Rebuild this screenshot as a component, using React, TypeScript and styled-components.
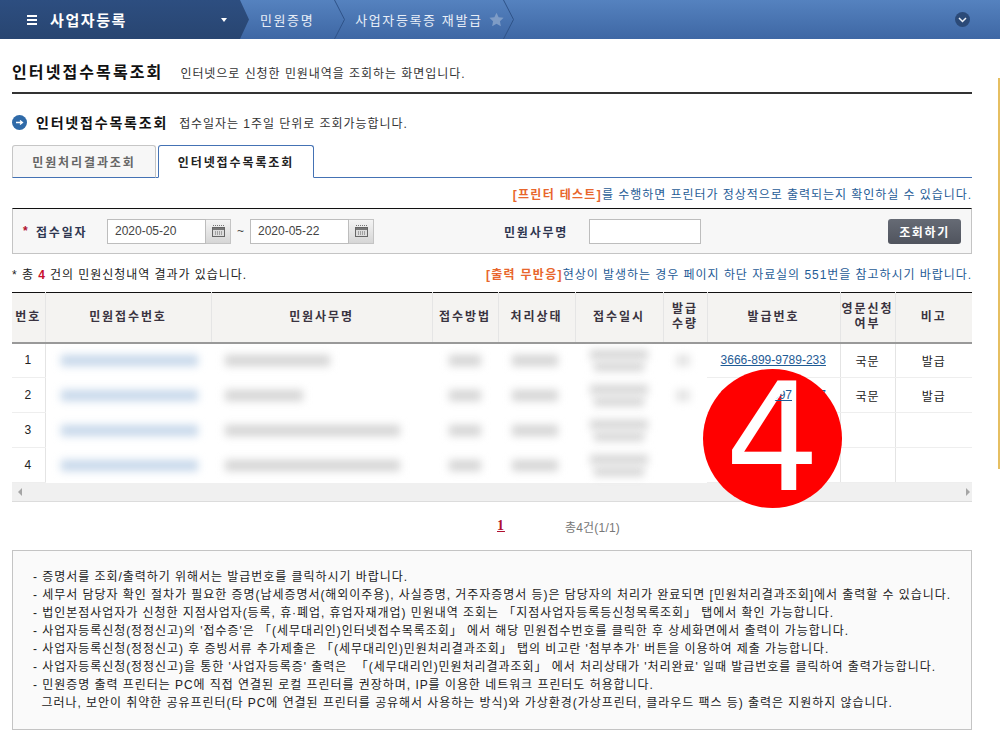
import styled, { createGlobalStyle } from "styled-components";

const GlobalStyle = createGlobalStyle`
  html, body {
    margin: 0;
    padding: 0;
    background: #fff;
    overflow: hidden;
  }
  body {
    font-family: "Liberation Sans", "Noto Sans CJK KR", sans-serif;
    font-size: 12px;
    color: #222;
    letter-spacing: 0.95px;
  }
  * { box-sizing: border-box; }
`;

const TopBar = styled.header`
  display: flex;
  align-items: center;
  height: 39px;
  background: linear-gradient(#5582bf, #3e67a4);
  color: #fff;
`;
const MenuSeg = styled.div`
  display: flex;
  align-items: center;
  width: 249px;
  height: 39px;
  padding-left: 27px;
  background: linear-gradient(#2d4e80, #284571);
  clip-path: polygon(0 0, 240px 0, 249px 19.5px, 240px 39px, 0 39px);
`;
const Burger = styled.span`
  width: 10px;
  height: 10px;
  margin-right: 13px;
  border-top: 2px solid #fff;
  border-bottom: 2px solid #fff;
  position: relative;
  &::after {
    content: "";
    position: absolute;
    left: 0;
    right: 0;
    top: 2px;
    height: 2px;
    background: #fff;
  }
`;
const MenuTitle = styled.strong`
  flex: 1;
  font-size: 15px;
  letter-spacing: 1.6px;
`;
const Caret = styled.span`
  width: 0;
  height: 0;
  margin-right: 22px;
  border-left: 3.5px solid transparent;
  border-right: 3.5px solid transparent;
  border-top: 4px solid #fff;
`;
const Crumb = styled.span<{ $gap: number }>`
  margin-left: ${(p) => p.$gap}px;
  font-size: 13px;
  letter-spacing: 1.6px;
  color: #e8eef7;
`;
const ChevronLine = styled.svg<{ $gap: number }>`
  flex: none;
  margin-left: ${(p) => p.$gap}px;
`;
const StarIcon = styled.svg`
  flex: none;
  margin-left: 6px;
`;
const Collapse = styled.span`
  display: flex;
  align-items: center;
  justify-content: center;
  width: 15px;
  height: 15px;
  margin-left: auto;
  margin-right: 30px;
  border-radius: 50%;
  background: #2b4a78;
`;

const Shell = styled.div`
  display: flex;
  align-items: flex-start;
`;
const Main = styled.main`
  width: 960px;
  margin-left: 12px;
`;
const SideRail = styled.div`
  width: 2px;
  height: 391px;
  margin-top: 39px;
  margin-left: 26px;
  background: #e6bf62;
`;

const TitleRow = styled.div`
  display: flex;
  align-items: baseline;
  height: 55px;
  padding-top: 20px;
  border-bottom: 2px solid #333;
`;
const PageTitle = styled.h1`
  margin: 0 17px 0 0;
  font-size: 16px;
  letter-spacing: 2.1px;
  color: #111;
`;
const Desc = styled.span`
  color: #333;
`;
const SectionRow = styled.div`
  display: flex;
  align-items: center;
  height: 20px;
  margin-top: 18px;
`;
const SectionIcon = styled.svg`
  flex: none;
  margin-right: 9px;
`;
const SectionTitle = styled.h2`
  margin: 0 11px 0 0;
  font-size: 14px;
  letter-spacing: 1.8px;
  color: #111;
`;
const Tabs = styled.div`
  display: flex;
  align-items: flex-end;
  height: 33px;
  margin-top: 13px;
  border-bottom: 1px solid #4472b4;
`;
const Tab = styled.div<{ $active?: boolean; $width: number }>`
  display: flex;
  align-items: center;
  justify-content: center;
  width: ${(p) => p.$width}px;
  height: ${(p) => (p.$active ? 33 : 33)}px;
  margin-right: 2px;
  margin-bottom: -1px;
  border: 1px solid ${(p) => (p.$active ? "#4472b4" : "#c6c6c6")};
  border-bottom: ${(p) => (p.$active ? "1px solid #fff" : "1px solid #4472b4")};
  border-radius: 3px 3px 0 0;
  background: ${(p) => (p.$active ? "#fff" : "#f7f7f7")};
  color: ${(p) => (p.$active ? "#222" : "#666")};
  font-weight: bold;
  letter-spacing: 1.9px;
`;
const Notice = styled.p`
  display: flex;
  align-items: center;
  justify-content: flex-end;
  height: 30px;
  margin: 0;
  color: #1f5c96;
  white-space: pre;
`;
const Warn = styled.b`
  color: #e8662c;
  letter-spacing: 1.3px;
`;
const SearchBox = styled.form`
  display: flex;
  align-items: center;
  height: 46px;
  border: 1px solid #c4c4c4;
  border-top: 1px solid #111;
  background: #f7f7f7;
  padding-left: 10px;
`;
const Star = styled.span`
  width: 13px;
  color: #b01030;
  font-weight: bold;
`;
const FieldLabel = styled.label<{ $width: number }>`
  width: ${(p) => p.$width}px;
  font-weight: bold;
  color: #2e3650;
  letter-spacing: 1.8px;
`;
const DateInput = styled.div`
  display: flex;
  align-items: center;
  width: 99px;
  height: 25px;
  padding-left: 7px;
  border: 1px solid #bdbdbd;
  background: #fff;
  color: #444;
  letter-spacing: 0;
`;
const CalButton = styled.button`
  display: flex;
  align-items: center;
  justify-content: center;
  width: 25px;
  height: 25px;
  padding: 0;
  border: 1px solid #c4c4c4;
  border-left: 0;
  background: linear-gradient(#f4f4f4, #d6d6d6);
`;
const Tilde = styled.span`
  width: 19px;
  text-align: center;
  letter-spacing: 0;
  color: #444;
`;
const NameInput = styled.div`
  width: 112px;
  height: 25px;
  border: 1px solid #bdbdbd;
  background: #fff;
`;
const SearchButton = styled.button`
  width: 73px;
  height: 25px;
  margin-left: auto;
  margin-right: 10px;
  padding: 0;
  border: 0;
  border-radius: 3px;
  background: linear-gradient(#666b75, #50545e);
  color: #fff;
  font: inherit;
  font-weight: bold;
  letter-spacing: 1.6px;
`;
const ResultRow = styled.div`
  display: flex;
  align-items: center;
  justify-content: space-between;
  height: 38px;
  white-space: pre;
`;
const Count = styled.b`
  color: #c8102e;
`;

const TableWrap = styled.div`
  position: relative;
`;
const Table = styled.table`
  width: 960px;
  table-layout: fixed;
  border-collapse: collapse;
  border-top: 1px solid #111;
`;
const Th = styled.th`
  height: 50px;
  padding: 0;
  background: #f4f3f1;
  border-right: 1px solid #e5e5e5;
  border-bottom: 2px solid #999;
  color: #3a3340;
  font-size: 12px;
  line-height: 15px;
  letter-spacing: 1.9px;
  &:last-child { border-right: 0; }
`;
const Td = styled.td<{ $line?: boolean }>`
  height: 35px;
  padding: 0;
  text-align: center;
  border-bottom: ${(p) => (p.$line ? "1px solid #eee" : "0")};
  border-right: ${(p) => (p.$line ? "1px solid #e4e4e4" : "0")};
  &:last-child { border-right: 0; }
`;
const IssueLink = styled.a`
  color: #1f5c96;
  text-decoration: underline;
  letter-spacing: 0;
`;
const Smear = styled.span<{ $w: number; $h?: number; $color?: string; $left?: number }>`
  display: block;
  width: ${(p) => p.$w}px;
  height: ${(p) => p.$h ?? 11}px;
  margin-left: ${(p) => p.$left ?? 0}px;
  background: ${(p) => p.$color ?? "#d4d4d4"};
  filter: blur(4px);
`;
const SmearStack = styled.div`
  display: flex;
  flex-direction: column;
  gap: 3px;
`;
const ScrollTrack = styled.div`
  display: flex;
  align-items: center;
  justify-content: space-between;
  height: 19px;
  padding: 0 2px 0 6px;
  background: #f0f0f0;
  border-bottom: 1px solid #dcdcdc;
`;
const ScrollArrow = styled.span<{ $right?: boolean }>`
  width: 0;
  height: 0;
  border-top: 4px solid transparent;
  border-bottom: 4px solid transparent;
  ${(p) => (p.$right ? "border-left: 4px solid #a5a5a5;" : "border-right: 4px solid #a5a5a5;")}
`;
const Badge = styled.div`
  position: absolute;
  left: 691px;
  top: 77px;
  width: 139px;
  height: 139px;
  border-radius: 50%;
  background: #ff0000;
  display: flex;
  align-items: center;
  justify-content: center;
`;
const BadgeDigit = styled.span`
  font-family: "DejaVu Sans", sans-serif;
  font-size: 150px;
  line-height: 139px;
  letter-spacing: 0;
  color: #fff;
`;
const Peek = styled.a`
  position: absolute;
  left: 69px;
  top: 19px;
  color: #1f5c96;
  text-decoration: underline;
  letter-spacing: 0;
  clip-path: polygon(14px 0, 20px 0, 20px 16px, 0 16px);
`;
const Pager = styled.div`
  display: flex;
  align-items: center;
  height: 48px;
  padding-left: 485px;
`;
const PageNo = styled.a`
  width: 68px;
  font-family: "Liberation Serif", serif;
  font-weight: bold;
  font-size: 14px;
  color: #b01030;
  text-decoration: underline;
`;
const PageTotal = styled.span`
  color: #777;
  letter-spacing: 0.2px;
`;
const GuideBox = styled.div`
  height: 180px;
  padding: 17px 20px;
  border: 1px solid #c4c4c4;
  background: #fafafa;
`;
const GuideLine = styled.div`
  height: 18px;
  line-height: 18px;
  white-space: pre;
  color: #222;
`;

const columns = [33, 166, 221, 66, 77, 88, 44, 133, 55, 77];
const heads = ["번호", "민원접수번호", "민원사무명", "접수방법", "처리상태", "접수일시", "발급\n수량", "발급번호", "영문신청\n여부", "비고"];
const nameWidths = [105, 78, 175, 175];

const guides = [
  "- 증명서를 조회/출력하기 위해서는 발급번호를 클릭하시기 바랍니다.",
  "- 세무서 담당자 확인 절차가 필요한 증명(납세증명서(해외이주용), 사실증명, 거주자증명서 등)은 담당자의 처리가 완료되면 [민원처리결과조회]에서 출력할 수 있습니다.",
  "- 법인본점사업자가 신청한 지점사업자(등록, 휴·폐업, 휴업자재개업) 민원내역 조회는 「지점사업자등록등신청목록조회」 탭에서 확인 가능합니다.",
  "- 사업자등록신청(정정신고)의 '접수증'은 「(세무대리인)인터넷접수목록조회」 에서 해당 민원접수번호를 클릭한 후 상세화면에서 출력이 가능합니다.",
  "- 사업자등록신청(정정신고) 후 증빙서류 추가제출은 「(세무대리인)민원처리결과조회」 탭의 비고란 '첨부추가' 버튼을 이용하여 제출 가능합니다.",
  "- 사업자등록신청(정정신고)을 통한 '사업자등록증' 출력은  「(세무대리인)민원처리결과조회」 에서 처리상태가 '처리완료' 일때 발급번호를 클릭하여 출력가능합니다.",
  "- 민원증명 출력 프린터는 PC에 직접 연결된 로컬 프린터를 권장하며, IP를 이용한 네트워크 프린터도 허용합니다.",
  "  그러나, 보안이 취약한 공유프린터(타 PC에 연결된 프린터를 공유해서 사용하는 방식)와 가상환경(가상프린터, 클라우드 팩스 등) 출력은 지원하지 않습니다.",
];

function Chevron({ gap }: { gap: number }) {
  return (
    <ChevronLine $gap={gap} width="11" height="39" viewBox="0 0 11 39">
      <path d="M0.5 0 L10.5 19.5 L0.5 39" fill="none" stroke="#2f5388" strokeWidth="1" />
    </ChevronLine>
  );
}

function CalendarIcon() {
  return (
    <svg width="13" height="12" viewBox="0 0 13 12">
      <rect x="0.5" y="2.5" width="12" height="9" fill="#ddd" stroke="#666" />
      <path d="M1 0.5 H12" stroke="#777" strokeDasharray="1 1" />
      <rect x="1" y="3" width="11" height="2" fill="#777" />
      <path d="M3 7 H10 M3 9 H10" stroke="#666" strokeDasharray="1 1" />
    </svg>
  );
}

export default function App() {
  return (
    <>
      <GlobalStyle />
      <TopBar>
        <MenuSeg>
          <Burger />
          <MenuTitle>사업자등록</MenuTitle>
          <Caret />
        </MenuSeg>
        <Crumb $gap={11}>민원증명</Crumb>
        <Chevron gap={20} />
        <Crumb $gap={10}>사업자등록증 재발급</Crumb>
        <StarIcon width="15" height="15" viewBox="0 0 24 24">
          <path d="M12 1 L15.4 8.3 L23.4 9.3 L17.5 14.8 L19 22.7 L12 18.8 L5 22.7 L6.5 14.8 L0.6 9.3 L8.6 8.3 Z" fill="#7e9cc6" />
        </StarIcon>
        <Chevron gap={-1} />
        <Collapse>
          <svg width="9" height="6" viewBox="0 0 9 6">
            <path d="M1 1 L4.5 4.5 L8 1" fill="none" stroke="#eef2f7" strokeWidth="1.5" />
          </svg>
        </Collapse>
      </TopBar>
      <Shell>
        <Main>
          <TitleRow>
            <PageTitle>인터넷접수목록조회</PageTitle>
            <Desc>인터넷으로 신청한 민원내역을 조회하는 화면입니다.</Desc>
          </TitleRow>
          <SectionRow>
            <SectionIcon width="15" height="15" viewBox="0 0 15 15">
              <circle cx="7.5" cy="7.5" r="7.5" fill="#2f6aa8" />
              <path d="M4 7.5 H10 M8 5.5 L10.5 7.5 L8 9.5" fill="none" stroke="#fff" strokeWidth="1.3" />
            </SectionIcon>
            <SectionTitle>인터넷접수목록조회</SectionTitle>
            <Desc>접수일자는 1주일 단위로 조회가능합니다.</Desc>
          </SectionRow>
          <Tabs>
            <Tab $width={144}>민원처리결과조회</Tab>
            <Tab $width={156} $active>인터넷접수목록조회</Tab>
          </Tabs>
          <Notice>
            <Warn>[프린터 테스트]</Warn>를 수행하면 프린터가 정상적으로 출력되는지 확인하실 수 있습니다.
          </Notice>
          <SearchBox>
            <Star>*</Star>
            <FieldLabel $width={71}>접수일자</FieldLabel>
            <DateInput>2020-05-20</DateInput>
            <CalButton type="button"><CalendarIcon /></CalButton>
            <Tilde>~</Tilde>
            <DateInput>2020-05-22</DateInput>
            <CalButton type="button"><CalendarIcon /></CalButton>
            <FieldLabel $width={215} style={{ paddingLeft: 130 }}>민원사무명</FieldLabel>
            <NameInput />
            <SearchButton type="button">조회하기</SearchButton>
          </SearchBox>
          <ResultRow>
            <span>* 총 <Count>4</Count> 건의 민원신청내역 결과가 있습니다.</span>
            <Notice as="span">
              <Warn>[출력 무반응]</Warn>현상이 발생하는 경우 페이지 하단 자료실의 551번을 참고하시기 바랍니다.
            </Notice>
          </ResultRow>
          <TableWrap>
            <Table>
              <colgroup>
                {columns.map((w, i) => (
                  <col key={i} width={w} />
                ))}
              </colgroup>
              <thead>
                <tr>
                  {heads.map((h) => (
                    <Th key={h} style={{ whiteSpace: "pre-line" }}>{h}</Th>
                  ))}
                </tr>
              </thead>
              <tbody>
                {nameWidths.map((w, i) => (
                  <tr key={i}>
                    <Td $line>{i + 1}</Td>
                    <Td><Smear $w={137} $left={15} $color="#c6d7ea" /></Td>
                    <Td><Smear $w={w} $left={14} /></Td>
                    <Td><Smear $w={32} $left={17} /></Td>
                    <Td><Smear $w={46} $left={14} /></Td>
                    <Td>
                      <SmearStack>
                        <Smear $w={58} $h={9} $left={15} />
                        <Smear $w={50} $h={9} $left={19} />
                      </SmearStack>
                    </Td>
                    <Td>{i < 2 && <Smear $w={14} $left={13} $color="#e2e2e2" />}</Td>
                    <Td $line>
                      {i === 0 && <IssueLink>3666-899-9789-233</IssueLink>}
                      {i === 1 && <IssueLink>3666-899-9789-997</IssueLink>}
                    </Td>
                    <Td $line>{i < 2 && "국문"}</Td>
                    <Td $line>{i < 2 && "발급"}</Td>
                  </tr>
                ))}
              </tbody>
            </Table>
            <ScrollTrack>
              <ScrollArrow />
              <ScrollArrow $right />
            </ScrollTrack>
            <Badge>
              <BadgeDigit>4</BadgeDigit>
              <Peek>997</Peek>
            </Badge>
          </TableWrap>
          <Pager>
            <PageNo>1</PageNo>
            <PageTotal>총4건(1/1)</PageTotal>
          </Pager>
          <GuideBox>
            {guides.map((g) => (
              <GuideLine key={g}>{g}</GuideLine>
            ))}
          </GuideBox>
        </Main>
        <SideRail />
      </Shell>
    </>
  );
}
